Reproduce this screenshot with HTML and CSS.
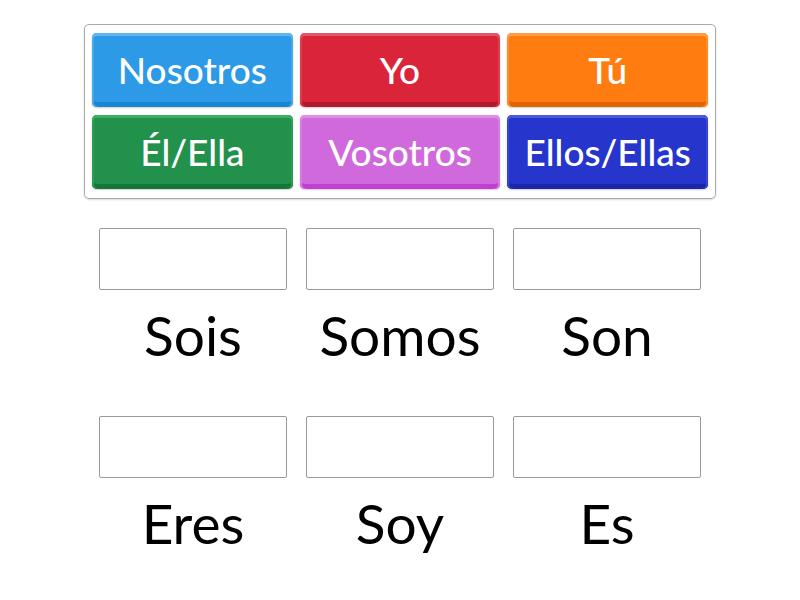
FILE: index.html
```html
<!DOCTYPE html>
<html lang="es">
<head>
<meta charset="utf-8">
<title>Ser</title>
<link rel="stylesheet" href="styles.css">
</head>
<body>
<main class="page">
  <section class="bank">
    <div class="tile blue">Nosotros</div>
    <div class="tile red">Yo</div>
    <div class="tile orange">Tú</div>
    <div class="tile green">Él/Ella</div>
    <div class="tile purple">Vosotros</div>
    <div class="tile navy">Ellos/Ellas</div>
  </section>
  <section class="targets">
    <div class="cell"><div class="slot"></div><div class="label">Sois</div></div>
    <div class="cell"><div class="slot"></div><div class="label">Somos</div></div>
    <div class="cell"><div class="slot"></div><div class="label">Son</div></div>
    <div class="cell"><div class="slot"></div><div class="label">Eres</div></div>
    <div class="cell"><div class="slot"></div><div class="label">Soy</div></div>
    <div class="cell"><div class="slot"></div><div class="label">Es</div></div>
  </section>
</main>
</body>
</html>
```
FILE: styles.css
```css
html, body {
  margin: 0;
  padding: 0;
  background: #ffffff;
}
body {
  font-family: "Lato", "Open Sans", sans-serif;
}
.page {
  width: 800px;
  height: 600px;
  padding-top: 24px;
  box-sizing: border-box;
}
.bank {
  width: 632px;
  margin: 0 auto;
  box-sizing: border-box;
  border: 1px solid #a9a9a9;
  border-radius: 5px;
  padding: 8px 7px 9px 7px;
  display: grid;
  grid-template-columns: repeat(3, 1fr);
  column-gap: 7px;
  row-gap: 8px;
  box-shadow: 0 1px 2px rgba(0,0,0,0.15);
}
.tile {
  height: 74px;
  border-radius: 5px;
  color: #ffffff;
  font-size: 37px;
  font-weight: 500;
  padding-bottom: 2px;
  box-sizing: border-box;
  display: flex;
  align-items: center;
  justify-content: center;
  box-shadow: inset 0 3px 0 var(--hi), inset 2px 0 0 var(--side), inset -2px 0 0 var(--side), inset 0 -5px 0 var(--lo), 0 1px 2px rgba(0,0,0,0.2);
  background: var(--bg);
}
.blue { --bg: #2c9ae6; --hi: #5fb7f0; --side: #46a9ec; --lo: #1a85d2; }
.red { --bg: #d92439; --hi: #e6566a; --side: #e03c50; --lo: #b21a2c; }
.orange { --bg: #ff7d10; --hi: #ff9c45; --side: #ff8c2a; --lo: #df6500; }
.green { --bg: #22914c; --hi: #3eae66; --side: #2c9d57; --lo: #187538; }
.purple { --bg: #d06adc; --hi: #df8de7; --side: #d77ae1; --lo: #c040d0; }
.navy { --bg: #2636cd; --hi: #4a5ada; --side: #3646d3; --lo: #1b27a8; }

.targets {
  width: 621px;
  margin: 29px auto 0;
  display: grid;
  grid-template-columns: repeat(3, 207px);
  row-gap: 49px;
}
.cell {
  display: flex;
  flex-direction: column;
  align-items: center;
}
.slot {
  width: 188px;
  height: 62px;
  box-sizing: border-box;
  border: 1px solid #9a9a9a;
  border-radius: 2px;
  background: #ffffff;
}
.label {
  margin-top: 13px;
  height: 64px;
  line-height: 64px;
  font-size: 55px;
  color: #000000;
  text-align: center;
}
```
